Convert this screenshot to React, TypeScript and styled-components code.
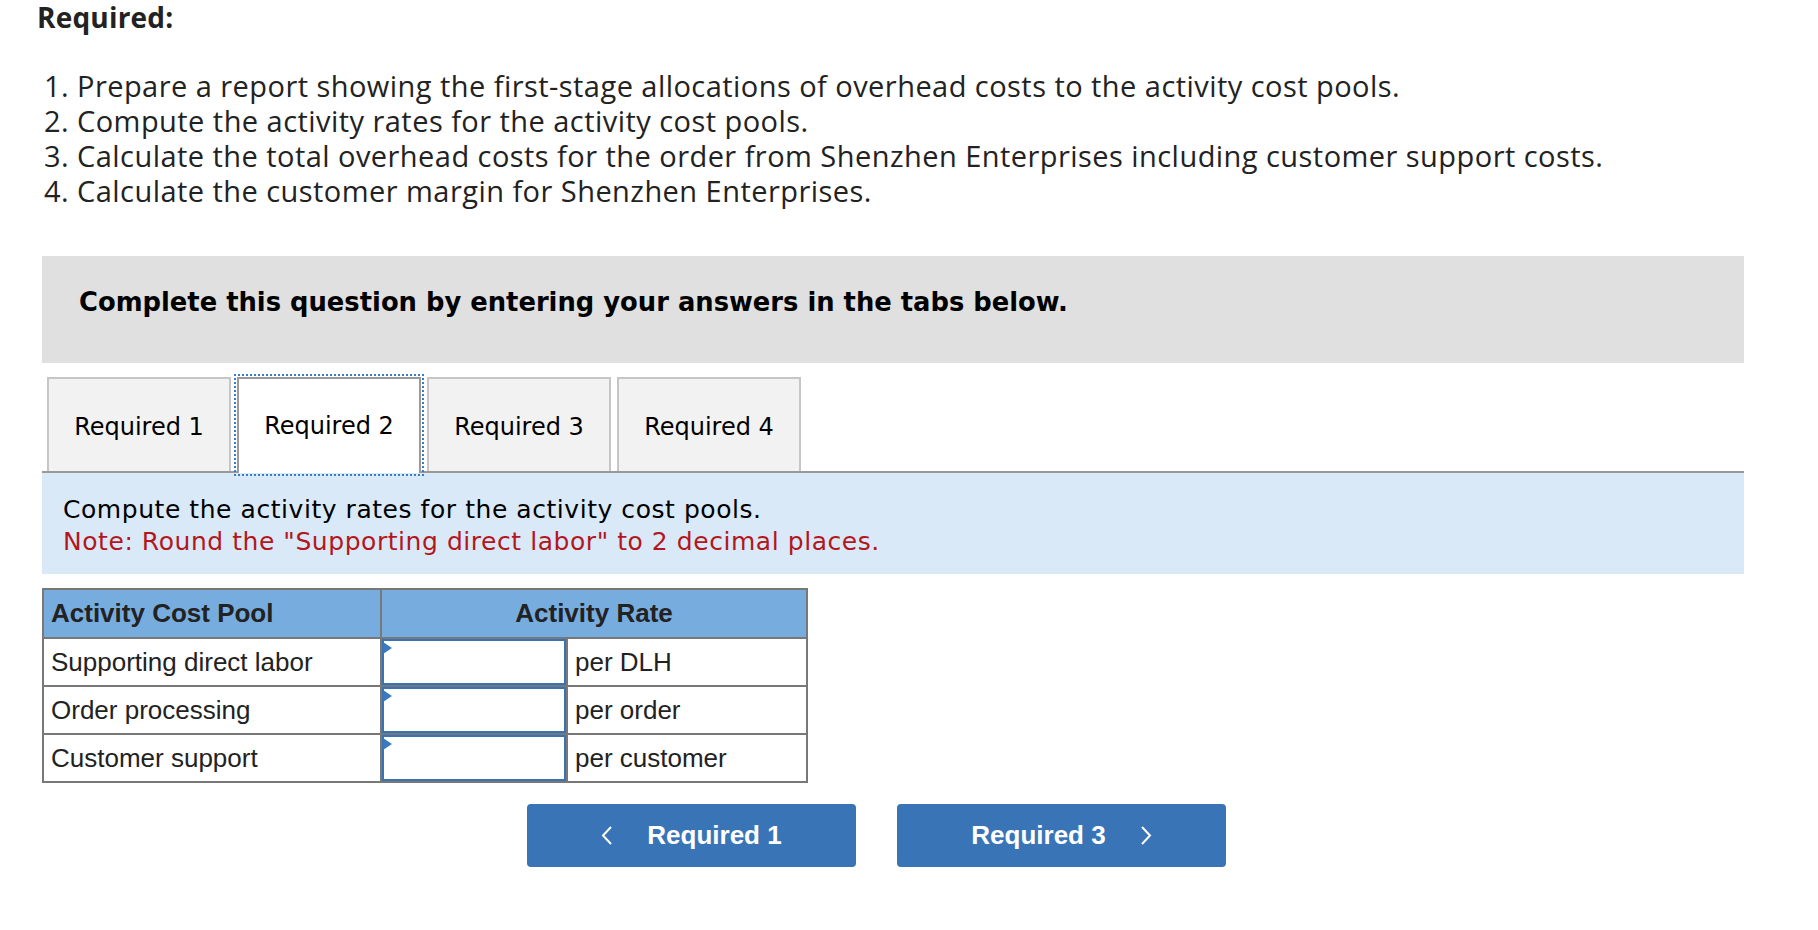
import { FC } from 'react'
import styled, { createGlobalStyle } from 'styled-components'

const GlobalStyle = createGlobalStyle`
  body {
    margin: 0;
    background: #fff;
  }
`

const Page = styled.div`
  width: 1702px;
  padding-left: 42px;
`
const Heading = styled.h2`
  margin: 0 0 0 -5px;
  font-family: 'Open Sans', Lato, sans-serif;
  font-weight: 700;
  font-size: 28px;
  letter-spacing: 0.2px;
  line-height: 35px;
  color: #222;
`
const TaskList = styled.ol`
  margin: 33px 0 0;
  padding-left: 35px;
  font-family: 'Open Sans', Lato, sans-serif;
  font-size: 29px;
  letter-spacing: 0.45px;
  line-height: 35px;
  color: #222;
`
const Banner = styled.div`
  margin-top: 48px;
  padding: 31px 0 46px 37px;
  background: #e0e0e0;
  font-family: 'DejaVu Sans', Verdana, sans-serif;
  font-weight: 700;
  font-size: 25.8px;
  line-height: 30px;
  color: #000;
`
const TabRow = styled.div`
  display: flex;
  align-items: flex-end;
  gap: 6px;
  margin-top: 14px;
  padding-left: 5px;
  border-bottom: 2px solid #999;
`
const Tab = styled.button<{ $active?: boolean }>`
  box-sizing: border-box;
  display: flex;
  align-items: center;
  justify-content: center;
  width: 184px;
  height: ${p => (p.$active ? '96px' : '94px')};
  margin-bottom: ${p => (p.$active ? '-2px' : '0')};
  padding: ${p => (p.$active ? '3px 0 3px' : '3px 0 0')};
  border: 2px solid ${p => (p.$active ? '#9a9a9a' : '#c6c6c6')};
  border-bottom: none;
  background: ${p => (p.$active ? '#fff' : '#f2f2f2')};
  outline: ${p => (p.$active ? '2px dotted #3a7cc4' : 'none')};
  outline-offset: 1px;
  position: relative;
  z-index: ${p => (p.$active ? 1 : 0)};
  font-family: 'DejaVu Sans', Verdana, sans-serif;
  font-size: 24px;
  color: #000;
  cursor: pointer;
`
const Prompt = styled.div`
  padding: 21px 21px 16px;
  background: #dae9f7;
  font-family: 'DejaVu Sans', Verdana, sans-serif;
  font-size: 25px;
  letter-spacing: 0.55px;
  line-height: 32px;
  color: #000;
`
const Note = styled.div`
  color: #b3161d;
`
const RateTable = styled.table`
  margin-top: 14px;
  width: 764px;
  table-layout: fixed;
  border-collapse: collapse;
  border: 2px solid #787878;
  font-family: 'Liberation Sans', Arial, sans-serif;
  font-size: 26px;
  color: #222;
`
const HeadCell = styled.th<{ $center?: boolean }>`
  height: 47px;
  padding: 0 7px;
  border: 2px solid #787878;
  background: #77acdf;
  font-weight: 700;
  text-align: ${p => (p.$center ? 'center' : 'left')};
`
const Cell = styled.td`
  height: 46px;
  padding: 0 7px;
  border: 2px solid #787878;
  background: #fff;
`
const InputCell = styled.td`
  height: 46px;
  padding: 0;
  border: 2px solid #787878;
`
const InputBox = styled.div`
  position: relative;
  height: 46px;
`
const RateInput = styled.input`
  box-sizing: border-box;
  width: 100%;
  height: 100%;
  border: 2px solid #3a73b5;
  background: #fff;
  font-family: 'Liberation Sans', Arial, sans-serif;
  font-size: 24px;
`
const Flag = styled.span`
  position: absolute;
  top: 3px;
  left: 1px;
  width: 0;
  height: 0;
  border-top: 6px solid transparent;
  border-bottom: 6px solid transparent;
  border-left: 9px solid #3a79bf;
  pointer-events: none;
`
const NavRow = styled.div`
  display: flex;
  gap: 41px;
  margin-top: 21px;
  padding-left: 485px;
`
const NavButton = styled.button`
  display: flex;
  align-items: center;
  justify-content: center;
  gap: 34px;
  width: 329px;
  height: 63px;
  border: none;
  border-radius: 4px;
  background: #3975b6;
  color: #fff;
  font-family: 'Liberation Sans', Arial, sans-serif;
  font-weight: 700;
  font-size: 26px;
  cursor: pointer;
`

const Chevron: FC<{ dir: 'left' | 'right' }> = ({ dir }) => (
  <svg width="12" height="19" viewBox="0 0 12 19" fill="none">
    <polyline
      points={dir === 'left' ? '10,1 2,9.5 10,18' : '2,1 10,9.5 2,18'}
      stroke="#fff"
      strokeWidth="2"
    />
  </svg>
)

const rows = [
  { pool: 'Supporting direct labor', unit: 'per DLH' },
  { pool: 'Order processing', unit: 'per order' },
  { pool: 'Customer support', unit: 'per customer' },
]

const tabs = ['Required 1', 'Required 2', 'Required 3', 'Required 4']

const App: FC = () => {
  return (
    <Page>
      <GlobalStyle />
      <Heading>Required:</Heading>
      <TaskList>
        <li>Prepare a report showing the first-stage allocations of overhead costs to the activity cost pools.</li>
        <li>Compute the activity rates for the activity cost pools.</li>
        <li>Calculate the total overhead costs for the order from Shenzhen Enterprises including customer support costs.</li>
        <li>Calculate the customer margin for Shenzhen Enterprises.</li>
      </TaskList>
      <Banner>Complete this question by entering your answers in the tabs below.</Banner>
      <TabRow>
        {tabs.map(t => (
          <Tab key={t} $active={t === 'Required 2'}>{t}</Tab>
        ))}
      </TabRow>
      <Prompt>
        <div>Compute the activity rates for the activity cost pools.</div>
        <Note>Note: Round the "Supporting direct labor" to 2 decimal places.</Note>
      </Prompt>
      <RateTable>
        <colgroup>
          <col style={{ width: 338 }} />
          <col style={{ width: 186 }} />
          <col style={{ width: 240 }} />
        </colgroup>
        <thead>
          <tr>
            <HeadCell>Activity Cost Pool</HeadCell>
            <HeadCell $center colSpan={2}>Activity Rate</HeadCell>
          </tr>
        </thead>
        <tbody>
          {rows.map(r => (
            <tr key={r.pool}>
              <Cell>{r.pool}</Cell>
              <InputCell>
                <InputBox>
                  <RateInput type="text" />
                  <Flag />
                </InputBox>
              </InputCell>
              <Cell>{r.unit}</Cell>
            </tr>
          ))}
        </tbody>
      </RateTable>
      <NavRow>
        <NavButton>
          <Chevron dir="left" />
          <span>Required 1</span>
        </NavButton>
        <NavButton>
          <span>Required 3</span>
          <Chevron dir="right" />
        </NavButton>
      </NavRow>
    </Page>
  )
}

export default App
